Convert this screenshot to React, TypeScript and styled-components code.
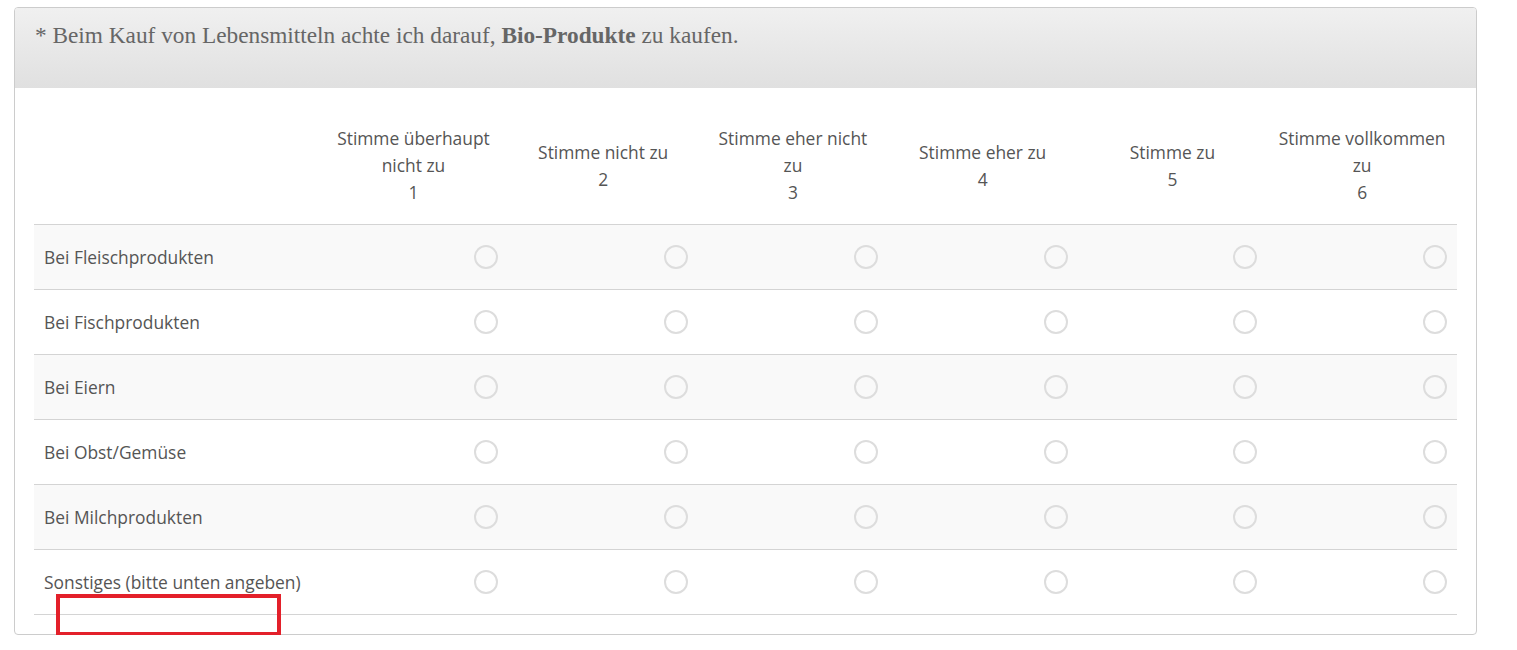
import styled, { createGlobalStyle } from "styled-components";

const GlobalStyle = createGlobalStyle`
    html, body {
        margin: 0;
        padding: 0;
        background: #ffffff;
    }
    body {
        padding: 7px 0 0 14px;
        font-family: "Open Sans", "Liberation Sans", sans-serif;
    }
`;

const scale = [
    { label: ["Stimme überhaupt", "nicht zu"], value: 1 },
    { label: ["Stimme nicht zu"], value: 2 },
    { label: ["Stimme eher nicht", "zu"], value: 3 },
    { label: ["Stimme eher zu"], value: 4 },
    { label: ["Stimme zu"], value: 5 },
    { label: ["Stimme vollkommen", "zu"], value: 6 },
];

const items = [
    "Bei Fleischprodukten",
    "Bei Fischprodukten",
    "Bei Eiern",
    "Bei Obst/Gemüse",
    "Bei Milchprodukten",
    "Sonstiges (bitte unten angeben)",
];

export default function App() {
    return (
        <>
            <GlobalStyle />
            <Panel>
                <PanelHeading>
                    * Beim Kauf von Lebensmitteln achte ich darauf, <strong>Bio-Produkte</strong> zu kaufen.
                </PanelHeading>
                <PanelBody>
                    <Matrix>
                        <colgroup>
                            <col style={{ width: "20%" }} />
                            {scale.map((s) => (
                                <col key={s.value} />
                            ))}
                        </colgroup>
                        <thead>
                            <tr>
                                <HeadCell />
                                {scale.map((s) => (
                                    <HeadCell key={s.value}>
                                        {s.label.map((l) => (
                                            <div key={l}>{l}</div>
                                        ))}
                                        <div>{s.value}</div>
                                    </HeadCell>
                                ))}
                            </tr>
                        </thead>
                        <tbody>
                            {items.map((item, i) => (
                                <Row key={item} $striped={i % 2 === 0}>
                                    <LabelCell>{item}</LabelCell>
                                    {scale.map((s) => (
                                        <RadioCell key={s.value}>
                                            <Radio />
                                        </RadioCell>
                                    ))}
                                </Row>
                            ))}
                        </tbody>
                    </Matrix>
                </PanelBody>
                <Highlight />
            </Panel>
        </>
    );
}

const Panel = styled.div`
    position: relative;
    width: 1461px;
    border: 1px solid #cccccc;
    border-radius: 4px;
    background: #ffffff;
`;

const PanelHeading = styled.div`
    height: 80px;
    box-sizing: border-box;
    padding: 14px 20px 0 20px;
    background: linear-gradient(to bottom, #f0f0f0 0%, #e0e0e0 100%);
    border-radius: 3px 3px 0 0;
    font-family: "Liberation Serif", "Times New Roman", serif;
    font-size: 23.3px;
    color: #666666;

    strong {
        font-weight: bold;
    }
`;

const PanelBody = styled.div`
    padding: 0 19px 19px 19px;
`;

const Matrix = styled.table`
    width: 100%;
    border-collapse: collapse;
    table-layout: fixed;
    color: #555555;
    font-size: 17.4px;
`;

const HeadCell = styled.th`
    height: 136px;
    box-sizing: border-box;
    padding: 37px 4px 18px 4px;
    font-weight: normal;
    line-height: 27px;
    text-align: center;
    vertical-align: middle;
`;

const Row = styled.tr<{ $striped: boolean }>`
    height: 65px;
    background: ${(p) => (p.$striped ? "#f9f9f9" : "#ffffff")};
    border-top: 1px solid #d4d4d4;
    border-bottom: 1px solid #d4d4d4;
`;

const LabelCell = styled.td`
    padding: 0 10px;
    vertical-align: middle;
    white-space: nowrap;
`;

const RadioCell = styled.td`
    padding: 0 10px 2px 0;
    text-align: right;
    vertical-align: middle;
`;

const Radio = styled.span`
    display: inline-block;
    width: 24px;
    height: 24px;
    box-sizing: border-box;
    border: 2.5px solid #dddddd;
    border-radius: 50%;
    vertical-align: middle;
`;

const Highlight = styled.div`
    position: absolute;
    left: 41px;
    top: 586px;
    width: 225px;
    height: 42px;
    box-sizing: border-box;
    border: 4px solid #e3202a;
`;
